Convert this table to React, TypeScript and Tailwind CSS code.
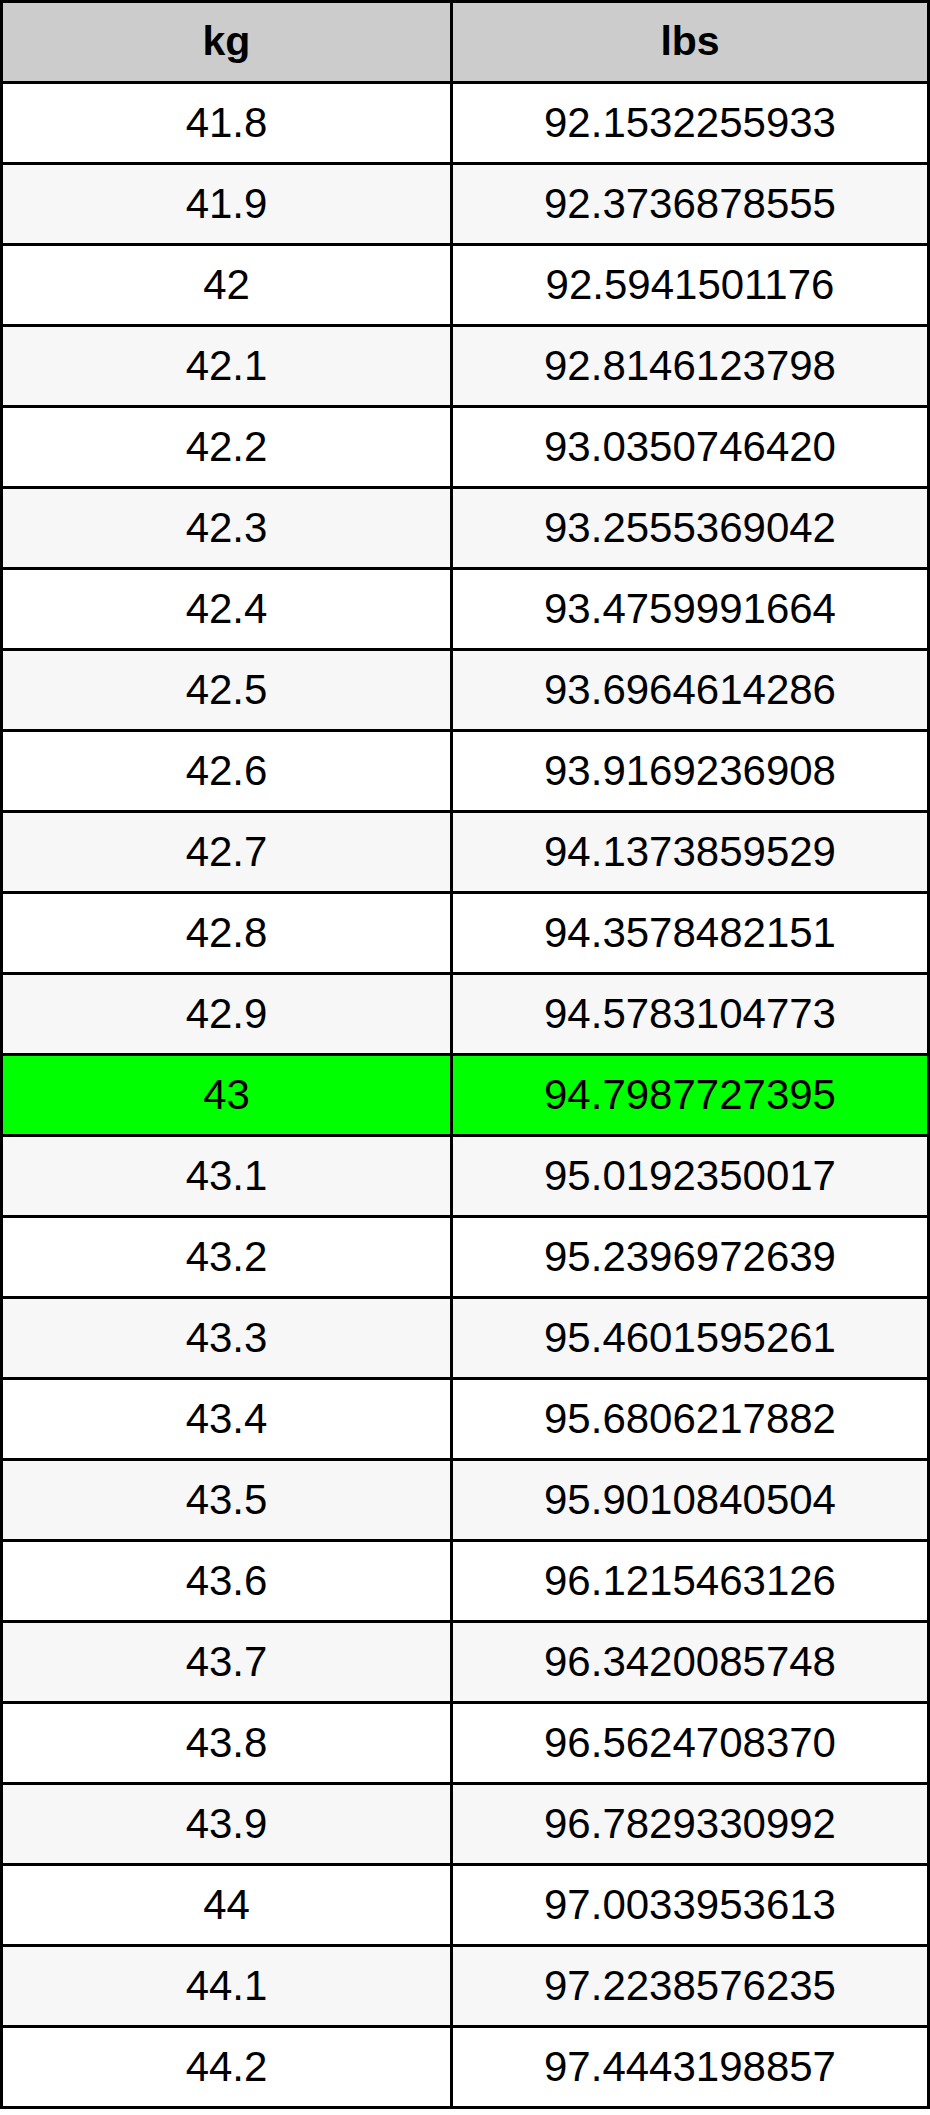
import React from "react";

const rows: [string, string][] = [
  ["41.8", "92.1532255933"],
  ["41.9", "92.3736878555"],
  ["42", "92.5941501176"],
  ["42.1", "92.8146123798"],
  ["42.2", "93.0350746420"],
  ["42.3", "93.2555369042"],
  ["42.4", "93.4759991664"],
  ["42.5", "93.6964614286"],
  ["42.6", "93.9169236908"],
  ["42.7", "94.1373859529"],
  ["42.8", "94.3578482151"],
  ["42.9", "94.5783104773"],
  ["43", "94.7987727395"],
  ["43.1", "95.0192350017"],
  ["43.2", "95.2396972639"],
  ["43.3", "95.4601595261"],
  ["43.4", "95.6806217882"],
  ["43.5", "95.9010840504"],
  ["43.6", "96.1215463126"],
  ["43.7", "96.3420085748"],
  ["43.8", "96.5624708370"],
  ["43.9", "96.7829330992"],
  ["44", "97.0033953613"],
  ["44.1", "97.2238576235"],
  ["44.2", "97.4443198857"],
];

export default function App() {
  return (
    <div className="bg-white w-[930px] min-h-[2115px] font-['Liberation_Sans',Arial,sans-serif] text-black">
      <div className="w-[930px] border-[3px] border-black">
        <div className="flex h-[78px] bg-[#cccccc] font-bold text-[41px]">
          <div className="w-[447px] flex items-center justify-center">kg</div>
          <div className="flex-1 border-l-[3px] border-black flex items-center justify-center">lbs</div>
        </div>
        {rows.map(([kg, lbs], i) => {
          const bg = kg === "43" ? "bg-[#00ff00]" : i % 2 === 1 ? "bg-[#f7f7f7]" : "bg-white";
          return (
            <div key={kg} className={`flex h-[81px] border-t-[3px] border-black text-[42px] ${bg}`}>
              <div className="w-[447px] flex items-center justify-center pb-[2px]">{kg}</div>
              <div className="flex-1 border-l-[3px] border-black flex items-center justify-center pb-[2px]">{lbs}</div>
            </div>
          );
        })}
      </div>
    </div>
  );
}
